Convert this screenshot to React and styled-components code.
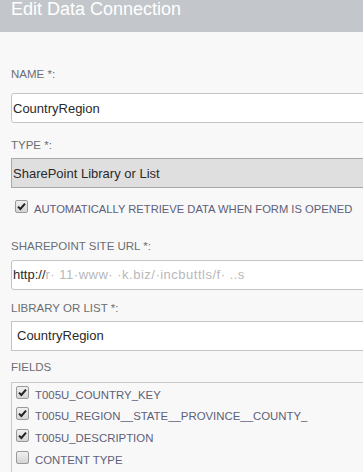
import styled, { createGlobalStyle } from "styled-components";

const GlobalStyle = createGlobalStyle`
  body {
    margin: 0;
    background: #f8f8f9;
    font-family: "Liberation Sans", Arial, sans-serif;
    overflow: hidden;
  }
`;

const Page = styled.div`
  width: 363px;
  height: 472px;
  overflow: hidden;
  background: #f8f8f9;
`;

const Header = styled.div`
  height: 33px;
  background: #c3c7cb;
  color: #fff;
  font-size: 18px;
  line-height: 20px;
  padding: 0 0 0 11px;
  box-sizing: border-box;
  margin-top: -1px;
`;

const Body = styled.div`
  padding: 35px 0 0 11px;
  display: flex;
  flex-direction: column;
`;

const Label = styled.div`
  font-size: 11.5px;
  color: #6b6e73;
  line-height: 14px;
  margin-bottom: ${(p) => p.$gap ?? 12}px;
  white-space: nowrap;
`;

const Box = styled.div`
  width: 400px;
  height: 30px;
  box-sizing: border-box;
  border: 1px solid #c4c4c4;
  border-radius: ${(p) => (p.$round ? 3 : 0)}px;
  background: ${(p) => (p.$grey ? "#dfdfdf" : "#fff")};
  border-color: ${(p) => (p.$grey ? "#a8a8a8" : "#c4c4c4")};
  padding-left: ${(p) => p.$pad || 1}px;
  display: flex;
  align-items: center;
  font-size: 13px;
  color: #2a2a2a;
  margin-bottom: ${(p) => p.$gap ?? 13}px;
  white-space: nowrap;
`;

const Faint = styled.span`
  color: #b8b8bc;
  letter-spacing: 0.5px;
`;

const CheckRow = styled.div`
  display: flex;
  align-items: flex-start;
  gap: 6px;
  padding-left: ${(p) => p.$indent || 4}px;
  height: ${(p) => p.$h || 21.7}px;
  margin-bottom: ${(p) => p.$gap || 0}px;
`;

const Tick = styled.span`
  width: 11px;
  height: 11px;
  margin-top: ${(p) => p.$top || 0}px;
  border: 1px solid #9a9a9a;
  border-radius: 2px;
  background: linear-gradient(#f0f0f0, #d4d4d4);
  display: flex;
  align-items: center;
  justify-content: center;
  flex-shrink: 0;
`;

const CheckText = styled.span`
  font-size: ${(p) => p.$size || 11.4}px;
  color: #5d6078;
  line-height: 14px;
  padding-top: ${(p) => p.$top || 5}px;
  white-space: nowrap;
`;

const FieldBox = styled.div`
  border-top: 1px solid #c9c9c9;
  border-left: 1px solid #c9c9c9;
  width: 400px;
  height: 120px;
`;

const Check = ({ on, top }) => (
  <Tick $top={top}>
    {on && (
      <svg width="9" height="9" viewBox="0 0 9 9">
        <path d="M1 4.6 L3.4 7 L8 1.6" fill="none" stroke="#222" strokeWidth="2" />
      </svg>
    )}
  </Tick>
);

const fields = [
  { name: "T005U_COUNTRY_KEY", on: true },
  { name: "T005U_REGION__STATE__PROVINCE__COUNTY_", on: true },
  { name: "T005U_DESCRIPTION", on: true },
  { name: "CONTENT TYPE", on: false },
];

export default function App() {
  return (
    <Page>
      <GlobalStyle />
      <Header>Edit Data Connection</Header>
      <Body>
        <Label>NAME *:</Label>
        <Box $round $gap={15}>CountryRegion</Box>
        <Label $gap={6}>TYPE *:</Label>
        <Box $grey $gap={11}>SharePoint Library or List</Box>
        <CheckRow $gap={18}>
          <Check on top={1} />
          <CheckText $top={3} $size={11.2}>AUTOMATICALLY RETRIEVE DATA WHEN FORM IS OPENED</CheckText>
        </CheckRow>
        <Label $gap={7}>SHAREPOINT SITE URL *:</Label>
        <Box $round $gap={11}>
          http://<Faint>r·       11·www·   ·k.biz/·incbuttls/f· ..s</Faint>
        </Box>
        <Label $gap={6}>LIBRARY OR LIST *:</Label>
        <Box $pad={5} $gap={9}>CountryRegion</Box>
        <Label $gap={8}>FIELDS</Label>
        <FieldBox>
          {fields.map((f) => (
            <CheckRow key={f.name}>
              <Check on={f.on} top={3} />
              <CheckText>{f.name}</CheckText>
            </CheckRow>
          ))}
        </FieldBox>
      </Body>
    </Page>
  );
}
